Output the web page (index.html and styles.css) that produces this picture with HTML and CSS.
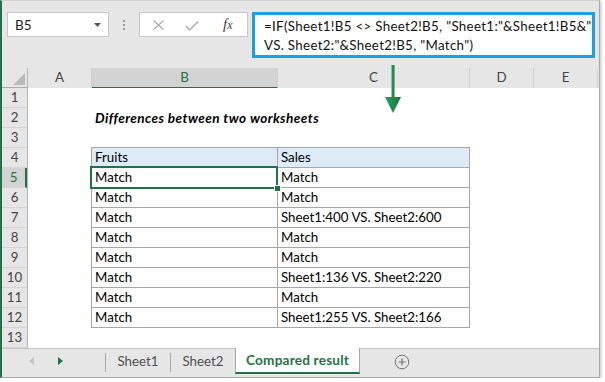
FILE: index.html
```html
<!DOCTYPE html>
<html lang="en">
<head>
  <meta charset="UTF-8">
  <title>Compared result - Excel</title>
  <link rel="stylesheet" href="styles.css">
</head>
<body>

<div class="window">

  <!-- Name box + formula bar -->
  <div class="formula-bar">
    <div class="name-box">
      <span>B5</span>
      <svg class="caret" width="7" height="4" viewBox="0 0 7 4"><path d="M0 0H7L3.5 4Z" fill="#555"/></svg>
    </div>
    <div class="grip"><i></i><i></i><i></i></div>
    <div class="fx-box">
      <svg class="ico-x" width="11" height="10" viewBox="0 0 11 10"><path d="M0.5 0.5L10.5 9.5M10.5 0.5L0.5 9.5" stroke="#a9a9a9" stroke-width="1.2" fill="none"/></svg>
      <svg class="ico-ok" width="14" height="10" viewBox="0 0 14 10"><path d="M0.8 5L4.5 8.8L13.2 0.6" stroke="#b3b3b3" stroke-width="1.6" fill="none"/></svg>
      <span class="fx">f<small>x</small></span>
    </div>
    <div class="formula">=IF(Sheet1!B5 &lt;&gt; Sheet2!B5, "Sheet1:"&amp;Sheet1!B5&amp;"<br>VS. Sheet2:"&amp;Sheet2!B5, "Match")</div>
  </div>

  <!-- Worksheet -->
  <div class="sheet">
    <div class="corner">
      <svg width="12" height="12" viewBox="0 0 12 12"><path d="M12 0V12H0Z" fill="#b9b9b9"/></svg>
    </div>
    <div class="col-heads">
      <div class="ch col-a">A</div>
      <div class="ch col-b selected">B</div>
      <div class="ch col-c">C</div>
      <div class="ch col-d">D</div>
      <div class="ch col-e">E</div>
      <div class="ch col-rest"></div>
    </div>
    <div class="row-heads">
      <div class="rh">1</div>
      <div class="rh">2</div>
      <div class="rh">3</div>
      <div class="rh">4</div>
      <div class="rh selected">5</div>
      <div class="rh">6</div>
      <div class="rh">7</div>
      <div class="rh">8</div>
      <div class="rh">9</div>
      <div class="rh">10</div>
      <div class="rh">11</div>
      <div class="rh">12</div>
      <div class="rh">13</div>
    </div>
    <div class="cells">
      <div class="title">Differences between two worksheets</div>
      <div class="data">
        <div class="td th">Fruits</div>
        <div class="td th">Sales</div>
        <div class="td active">Match<span class="handle"></span></div>
        <div class="td">Match</div>
        <div class="td">Match</div>
        <div class="td">Match</div>
        <div class="td">Match</div>
        <div class="td">Sheet1:400 VS. Sheet2:600</div>
        <div class="td">Match</div>
        <div class="td">Match</div>
        <div class="td">Match</div>
        <div class="td">Match</div>
        <div class="td">Match</div>
        <div class="td">Sheet1:136 VS. Sheet2:220</div>
        <div class="td">Match</div>
        <div class="td">Match</div>
        <div class="td">Match</div>
        <div class="td">Sheet1:255 VS. Sheet2:166</div>
      </div>
    </div>
  </div>

  <!-- Sheet tabs -->
  <div class="tabs">
    <div class="tab-nav">
      <svg width="5" height="8" viewBox="0 0 5 8"><path d="M5 0V8L0 4Z" fill="#c3c3c3"/></svg>
      <svg width="5" height="8" viewBox="0 0 5 8"><path d="M0 0V8L5 4Z" fill="#217346"/></svg>
    </div>
    <span class="sep"></span>
    <div class="tab">Sheet1</div>
    <span class="sep"></span>
    <div class="tab">Sheet2</div>
    <div class="tab current">Compared result</div>
    <svg class="add-sheet" width="16" height="16" viewBox="0 0 16 16">
      <circle cx="8" cy="8" r="6.8" fill="none" stroke="#737373" stroke-width="1"/>
      <path d="M8 4.5V11.5M4.5 8H11.5" stroke="#737373" stroke-width="1.2"/>
    </svg>
  </div>

  <!-- annotation arrow -->
  <svg class="arrow" width="18" height="50" viewBox="0 0 18 50">
    <defs>
      <linearGradient id="g" x1="0" x2="1" y1="0" y2="0">
        <stop offset="0" stop-color="#2a9d5a"/>
        <stop offset="1" stop-color="#127a3e"/>
      </linearGradient>
    </defs>
    <rect x="7.5" y="1" width="3" height="36" fill="url(#g)"/>
    <path d="M1 33H17L9 49Z" fill="url(#g)"/>
  </svg>

</div>

</body>
</html>
```

FILE: styles.css
```css
body {
  margin: 0;
  background: #fff;
  font-family: Lato, 'Open Sans', sans-serif;
  color: #000;
}

.window {
  position: relative;
  width: 597px;
  height: 376px;
  border-left: 2px solid #217346;
  border-right: 1px solid #a9a9a9;
  border-top: 1px solid #d0d0d0;
  border-bottom: 1px solid #a9a9a9;
  background: #e6e6e6;
  box-shadow: 1px 1px 3px rgba(0,0,0,0.25);
  display: flex;
  flex-direction: column;
}

/* ---------- formula bar ---------- */
.formula-bar {
  height: 67px;
  display: flex;
  align-items: flex-start;
  padding-top: 11px;
  box-sizing: border-box;
}
.name-box {
  margin-left: 5px;
  width: 102px;
  height: 25px;
  box-sizing: border-box;
  border: 1px solid #c8c8c8;
  background: #fff;
  display: flex;
  align-items: center;
  justify-content: space-between;
  padding: 0 7px;
  font-size: 13.5px;
  color: #222;
}
.grip {
  width: 30px;
  height: 25px;
  display: flex;
  flex-direction: column;
  align-items: center;
  justify-content: center;
  gap: 2px;
}
.grip i {
  width: 2px;
  height: 2px;
  background: #9c9c9c;
}
.fx-box {
  width: 109px;
  height: 25px;
  box-sizing: border-box;
  border: 1px solid #c8c8c8;
  background: #fff;
  display: flex;
  align-items: center;
}
.ico-x {
  margin-left: 13px;
}
.ico-ok {
  margin-left: 21px;
  margin-top: 2px;
}
.fx {
  margin-left: 24px;
  font-family: 'Liberation Serif', serif;
  font-style: italic;
  font-size: 15px;
  color: #444;
}
.fx small {
  font-size: 12px;
}
.formula {
  margin-left: 4px;
  width: 343px;
  height: 46px;
  box-sizing: border-box;
  border: 3px solid #1c9fe3;
  background: #fff;
  padding: 2px 0 0 9px;
  font-size: 13.3px;
  letter-spacing: 0.33px;
  line-height: 19px;
  white-space: nowrap;
  color: #111;
}

/* ---------- sheet grid ---------- */
.sheet {
  height: 280px;
  display: grid;
  grid-template-columns: 26px 1fr;
  grid-template-rows: 20px 1fr;
  font-size: 13.3px;
}
.corner {
  box-sizing: border-box;
  border-right: 1px solid #b5b5b5;
  border-bottom: 1px solid #ababab;
  display: flex;
  align-items: flex-end;
  justify-content: flex-end;
  padding: 0 2px 2px 0;
}
.col-heads {
  display: grid;
  grid-template-columns: 64px 186px 192px 64px 64px 1fr;
}
.ch {
  box-sizing: border-box;
  border-right: 1px solid #cfcfcf;
  border-bottom: 1px solid #ababab;
  text-align: center;
  line-height: 19px;
  color: #444;
}
.ch.col-rest {
  border-right: none;
}
.ch.selected {
  background: #d3d3d3;
  border-bottom: 2px solid #217346;
  color: #217346;
}
.row-heads {
  border-right: 1px solid #b5b5b5;
}
.rh {
  height: 20px;
  box-sizing: border-box;
  border-bottom: 1px solid #d4d4d4;
  text-align: center;
  line-height: 19px;
  color: #444;
}
.rh.selected {
  background: #d3d3d3;
  border-right: 2px solid #217346;
  color: #217346;
}

.cells {
  background: #fff;
  display: grid;
  grid-template-columns: 64px 186px 192px 64px 64px 1fr;
  grid-template-rows: repeat(13, 20px);
}
.title {
  grid-column: 2;
  grid-row: 2;
  padding-left: 3px;
  line-height: 20px;
  font-size: 13.6px;
  letter-spacing: 0.4px;
  font-weight: bold;
  font-style: italic;
  white-space: nowrap;
}
.data {
  grid-column: 2 / span 2;
  grid-row: 4 / span 9;
  margin: -1px 0 0 -1px;
  border-left: 1px solid #a6a6a6;
  border-top: 1px solid #a6a6a6;
  display: grid;
  grid-template-columns: 186px 192px;
  grid-auto-rows: 20px;
}
.td {
  box-sizing: border-box;
  border-right: 1px solid #a6a6a6;
  border-bottom: 1px solid #a6a6a6;
  padding-left: 3px;
  line-height: 19px;
  white-space: nowrap;
}
.td.th {
  background: #ddebf7;
}
.td.active {
  position: relative;
}
.td.active::after {
  content: '';
  position: absolute;
  left: -2px;
  top: -2px;
  width: 188px;
  height: 23px;
  box-sizing: border-box;
  border: 2px solid #217346;
}
.handle {
  position: absolute;
  left: 182px;
  top: 17px;
  width: 5px;
  height: 5px;
  border: 1px solid #fff;
  background: #217346;
  z-index: 1;
}

/* ---------- tabs ---------- */
.tabs {
  height: 29px;
  box-sizing: border-box;
  border-top: 1px solid #c6c6c6;
  display: flex;
  align-items: flex-start;
  font-size: 13.3px;
}
.tab-nav {
  width: 103px;
  height: 24px;
  display: flex;
  align-items: center;
  padding-left: 27px;
  gap: 24px;
  box-sizing: border-box;
}
.sep {
  width: 1px;
  height: 19px;
  margin-top: 4px;
  background: #a8a8a8;
}
.tab {
  width: 64px;
  height: 24px;
  line-height: 24px;
  text-align: center;
  color: #505050;
}
.tab.current {
  width: 125px;
  height: 26px;
  margin-top: -1px;
  box-sizing: border-box;
  background: #fff;
  border-left: 1px solid #a8a8a8;
  border-right: 1px solid #a8a8a8;
  border-bottom: 2px solid #217346;
  line-height: 24px;
  font-size: 13.6px;
  letter-spacing: 0.2px;
  font-weight: bold;
  color: #217346;
}
.add-sheet {
  margin: 5px 0 0 34px;
}

/* ---------- arrow overlay ---------- */
.arrow {
  position: absolute;
  left: 382px;
  top: 63px;
}
```
